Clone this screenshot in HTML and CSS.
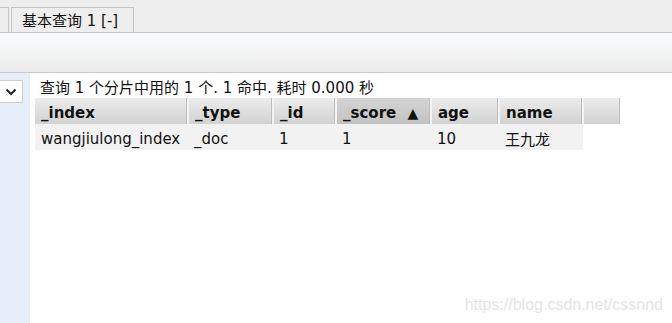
FILE: index.html
```html
<!DOCTYPE html>
<html lang="zh">
<head>
    <meta charset="UTF-8">
    <title>基本查询</title>
    <link rel="stylesheet" href="styles.css">
</head>
<body>
    <div id="tabs">
        <div class="tab stub"></div>
        <div class="tab active">基本查询 1 [-]</div>
    </div>
    <div id="toolbar"></div>
    <div id="main">
        <div id="side">
            <div class="select">
                <svg width="12" height="8" viewBox="0 0 12 8"><path d="M1.5 1.5 L6 6 L10.5 1.5" fill="none" stroke="#222" stroke-width="2"/></svg>
            </div>
        </div>
        <div id="results">
            <div class="summary">查询 1 个分片中用的 1 个. 1 命中. 耗时 0.000 秒</div>
            <table>
                <thead>
                    <tr>
                        <th class="c-index">_index</th>
                        <th class="c-type">_type</th>
                        <th class="c-id">_id</th>
                        <th class="c-score sorted">_score <span class="arrow">▲</span></th>
                        <th class="c-age">age</th>
                        <th class="c-name">name</th>
                        <th class="c-pad"></th>
                    </tr>
                </thead>
                <tbody>
                    <tr>
                        <td>wangjiulong_index</td>
                        <td>_doc</td>
                        <td>1</td>
                        <td>1</td>
                        <td>10</td>
                        <td>王九龙</td>
                        <td class="empty"></td>
                    </tr>
                </tbody>
            </table>
        </div>
    </div>
    <div class="watermark">https://blog.csdn.net/cssnnd</div>
</body>
</html>
```
FILE: styles.css
```css
body {
    margin: 0;
    font-family: "DejaVu Sans", "Noto Sans CJK SC", sans-serif;
    font-size: 15px;
    color: #111;
    background: #fff;
    height: 323px;
    overflow: hidden;
    position: relative;
}

#tabs {
    height: 32px;
    background: #eeeeee;
    border-bottom: 1px solid #c4c4c4;
    display: flex;
    align-items: flex-end;
}

.tab {
    border: 1px solid #c4c4c4;
    border-bottom: none;
    box-sizing: border-box;
    height: 25px;
}

.tab.stub {
    width: 9px;
    border-left: none;
}

.tab.active {
    margin-left: 2px;
    width: 123px;
    padding: 3px 0 0 10px;
    line-height: 20px;
    white-space: nowrap;
}

#toolbar {
    height: 39px;
    background: linear-gradient(#fafbfc, #ececec);
    border-bottom: 1px solid #c8c8c8;
}

#main {
    display: flex;
    height: 250px;
}

#side {
    width: 30px;
    background: #e6eefa;
    padding-top: 7px;
    box-sizing: border-box;
}

.select {
    width: 23px;
    height: 23px;
    background: #fff;
    border: 1px solid #cfcfcf;
    border-left: none;
    box-sizing: border-box;
    display: flex;
    align-items: center;
    justify-content: center;
}

#results {
    padding: 6px 0 0 5px;
}

.summary {
    padding-left: 5px;
    height: 19px;
    line-height: 18px;
    white-space: nowrap;
}

table {
    border-collapse: collapse;
}

th {
    height: 26px;
    padding: 3px 0 0 6px;
    text-align: left;
    font-weight: bold;
    background: linear-gradient(#ececec, #d2d2d2);
    border-right: 2px solid #f4f4f4;
    box-shadow: inset -1px 0 0 #bdbdbd;
    box-sizing: border-box;
    white-space: nowrap;
}

th.sorted {
    background: linear-gradient(#d4d4d4, #c2c2c2);
}

.arrow {
    font-size: 14px;
    margin-left: 6px;
}

.c-index { width: 153px; }
.c-type { width: 85px; }
.c-id { width: 63px; }
.c-score { width: 95px; }
.c-age { width: 68px; }
.c-name { width: 84px; }
.c-pad { width: 37px; border-right: none; }

td {
    height: 26px;
    padding: 3px 0 0 6px;
    box-sizing: border-box;
    background: #f2f2f2;
    white-space: nowrap;
}

td.empty {
    background: #fff;
}

.watermark {
    position: absolute;
    right: 9px;
    bottom: 9px;
    font-family: "Liberation Sans", Arial, sans-serif;
    font-size: 16px;
    color: #e4e4e4;
}
```
